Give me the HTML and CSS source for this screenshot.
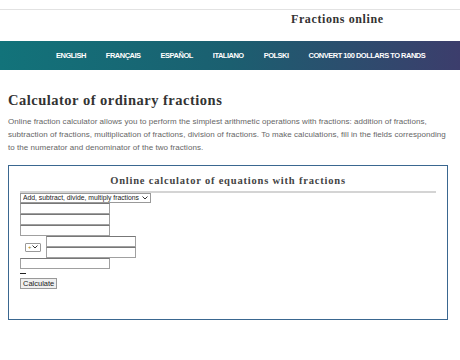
FILE: index.html
```html
<!DOCTYPE html>
<html>

<head>
    <meta http-equiv="Content-Type" content="text/html;charset=UTF-8">
    <title>Fractions online</title>
    <link rel="stylesheet" href="styles.css">
</head>

<body>
    <div class="topline"></div>
    <div class="brand">Fractions online</div>
    <nav class="menu">
        <a href="#">ENGLISH</a>
        <a href="#">FRANÇAIS</a>
        <a href="#">ESPAÑOL</a>
        <a href="#">ITALIANO</a>
        <a href="#">POLSKI</a>
        <a href="#">CONVERT 100 DOLLARS TO RANDS</a>
    </nav>
    <div class="content">
        <h1>Calculator of ordinary fractions</h1>
        <p class="intro">Online fraction calculator allows you to perform the simplest arithmetic operations with fractions: addition of fractions, subtraction of fractions, multiplication of fractions, division of fractions. To make calculations, fill in the fields corresponding to the numerator and denominator of the two fractions.</p>
        <div class="calc">
            <h2>Online calculator of equations with fractions</h2>
            <div class="form">
                <select class="mode">
                    <option>Add, subtract, divide, multiply fractions</option>
                </select>
                <input type="text" class="field">
                <input type="text" class="field">
                <input type="text" class="field">
                <div class="second">
                    <select class="sign">
                        <option>+</option>
                    </select>
                    <div class="pair">
                        <input type="text" class="field">
                        <input type="text" class="field">
                    </div>
                </div>
                <input type="text" class="field">
                <div class="dash"></div>
                <button class="go">Calculate</button>
            </div>
        </div>
    </div>
</body>

</html>
```

FILE: styles.css
```css
* {
    box-sizing: border-box;
    margin: 0;
    padding: 0;
}

body {
    width: 460px;
    height: 360px;
    overflow: hidden;
    background: #fff;
    font-family: "Liberation Sans", Arial, sans-serif;
}

.topline {
    height: 10px;
    border-bottom: 1px solid #e2e2e2;
}

.brand {
    height: 31px;
    padding-left: 291px;
    padding-top: 2px;
    font-family: "Liberation Serif", "Times New Roman", serif;
    font-weight: bold;
    font-size: 12px;
    letter-spacing: 0.6px;
    color: #333;
}

.menu {
    height: 29px;
    display: flex;
    align-items: center;
    gap: 20px;
    padding-left: 56px;
    background: linear-gradient(90deg, #12737a, #1b5f70 50%, #3c3d6c);
}

.menu a {
    color: #fff;
    text-decoration: none;
    font-weight: bold;
    font-size: 7.5px;
    letter-spacing: -0.5px;
}

.content {
    width: 448px;
    padding-left: 8px;
}

h1 {
    margin-top: 20px;
    font-family: "Liberation Serif", "Times New Roman", serif;
    font-size: 14.5px;
    letter-spacing: 0.5px;
    color: #333;
    line-height: 20px;
}

.intro {
    width: 446px;
    margin-top: 5px;
    font-size: 8px;
    letter-spacing: 0.05px;
    line-height: 13px;
    color: #666;
}

.calc {
    margin-top: 11px;
    height: 155px;
    border: 1px solid #3a6790;
    padding: 8px 11px 0 11px;
}

h2 {
    text-align: center;
    font-family: "Liberation Serif", "Times New Roman", serif;
    font-size: 10.5px;
    letter-spacing: 0.8px;
    color: #444;
    line-height: 14px;
    padding-bottom: 3px;
    border-bottom: 2px solid #d4d4d4;
}

.form {
    display: flex;
    flex-direction: column;
    align-items: flex-start;
}

.mode,
.sign {
    appearance: none;
    -webkit-appearance: none;
    height: 10px;
    font-family: "Liberation Sans", Arial, sans-serif;
    border: 1px solid #999;
    border-radius: 0;
    color: #222;
    background: #fff url("data:image/svg+xml,%3Csvg xmlns='http://www.w3.org/2000/svg' width='6' height='4' viewBox='0 0 6 4'%3E%3Cpath d='M0.5 0.5 L3 3 L5.5 0.5' fill='none' stroke='%23333' stroke-width='1'/%3E%3C/svg%3E") no-repeat right 2px center;
}

.mode {
    width: 131px;
    font-size: 6.8px;
    line-height: 8px;
    padding: 0 8px 0 2px;
}

.field {
    width: 90px;
    height: 11px;
    border: 1px solid #a0a0a0;
    border-top-color: #777;
    background: #fff;
}

.second {
    display: flex;
    align-items: center;
    padding-left: 5px;
    gap: 5px;
}

.pair {
    display: flex;
    flex-direction: column;
}

.sign {
    width: 16px;
    height: 9px;
    font-size: 6px;
    line-height: 7px;
    padding: 0 0 0 2px;
    color: #a08000;
    border-radius: 1px;
}

.dash {
    width: 6px;
    margin-top: 4px;
    border-bottom: 1px solid #222;
}

.go {
    margin-top: 4px;
    height: 11px;
    padding: 0 2px;
    font-family: "Liberation Sans", Arial, sans-serif;
    font-size: 7.5px;
    background: #efefef;
    border: 1px solid #999;
    color: #222;
}
```
